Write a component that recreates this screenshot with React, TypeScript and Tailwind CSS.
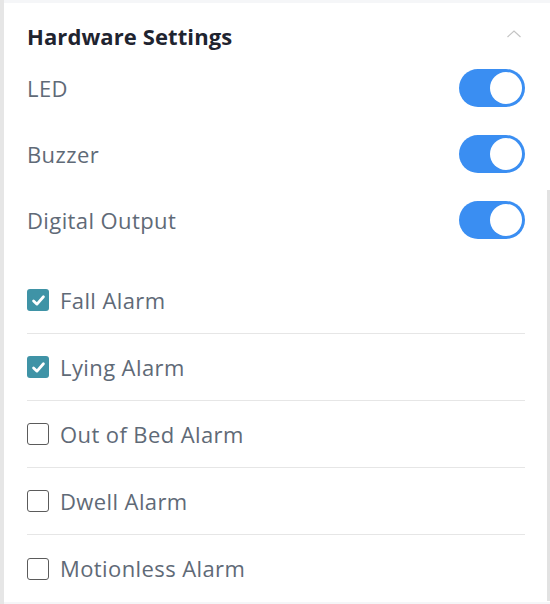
import React from "react";

const toggles = ["LED", "Buzzer", "Digital Output"];
const alarms: { label: string; checked: boolean }[] = [
  { label: "Fall Alarm", checked: true },
  { label: "Lying Alarm", checked: true },
  { label: "Out of Bed Alarm", checked: false },
  { label: "Dwell Alarm", checked: false },
  { label: "Motionless Alarm", checked: false },
];

function Toggle() {
  return (
    <div className="w-[66px] h-[38px] rounded-full bg-[#3a8ef2] flex items-center justify-end pr-[3px]">
      <div className="w-[32px] h-[32px] rounded-full bg-white" />
    </div>
  );
}

function Check({ checked }: { checked: boolean }) {
  if (checked) {
    return (
      <div className="w-[22px] h-[22px] rounded-[3px] bg-[#3f93a6] flex items-center justify-center shrink-0">
        <svg width="15" height="15" viewBox="0 0 14 14" fill="none">
          <path d="M2.4 7.4 L5.6 10.4 L11.6 3.5" stroke="white" strokeWidth="2.6" strokeLinecap="round" strokeLinejoin="round" />
        </svg>
      </div>
    );
  }
  return <div className="w-[22px] h-[22px] rounded-[3px] border-[1.5px] border-[#5b5b5b] bg-white shrink-0" />;
}

export default function App() {
  return (
    <div
      className="relative w-[550px] h-[604px] flex bg-[#f5f6f8] overflow-hidden"
      style={{ fontFamily: '"Open Sans", "Noto Sans", sans-serif' }}
    >
      <div className="w-[4px] h-full bg-[#e6e6e6]" />
      <div className="flex-1 flex flex-col pt-[3px] pb-[3px]">
        <div className="flex-1 bg-white pl-[23px] pr-[25px] flex flex-col">
          <div className="pt-[19px] flex items-center justify-between h-[52px] pb-[5px]">
            <h2 className="text-[22px] leading-[28px] font-bold text-[#1f2430] tracking-[0.1px]">Hardware Settings</h2>
            <svg width="16" height="10" viewBox="0 0 16 10" className="mr-[3px] mt-[-4px]" fill="none">
              <path d="M1.5 8 L8 2 L14.5 8" stroke="#c4c4c4" strokeWidth="1.2" />
            </svg>
          </div>
          {toggles.map((t) => (
            <div key={t} className="h-[66px] flex items-center justify-between">
              <span className="text-[22px] text-[#5f6a77] tracking-[0.4px]">{t}</span>
              <Toggle />
            </div>
          ))}
          <div className="h-[14px]" />
          {alarms.map((a, i) => (
            <div
              key={a.label}
              className={`h-[67px] flex items-center gap-[11px] ${i < alarms.length - 1 ? "border-b border-[#e6e6e6]" : ""}`}
            >
              <Check checked={a.checked} />
              <span className="text-[22px] text-[#5f6a77] tracking-[0.4px]">{a.label}</span>
            </div>
          ))}
        </div>
      </div>
      <div className="absolute right-0 top-[190px] bottom-[3px] w-[3px] bg-[#e2e2e2]" />
    </div>
  );
}
